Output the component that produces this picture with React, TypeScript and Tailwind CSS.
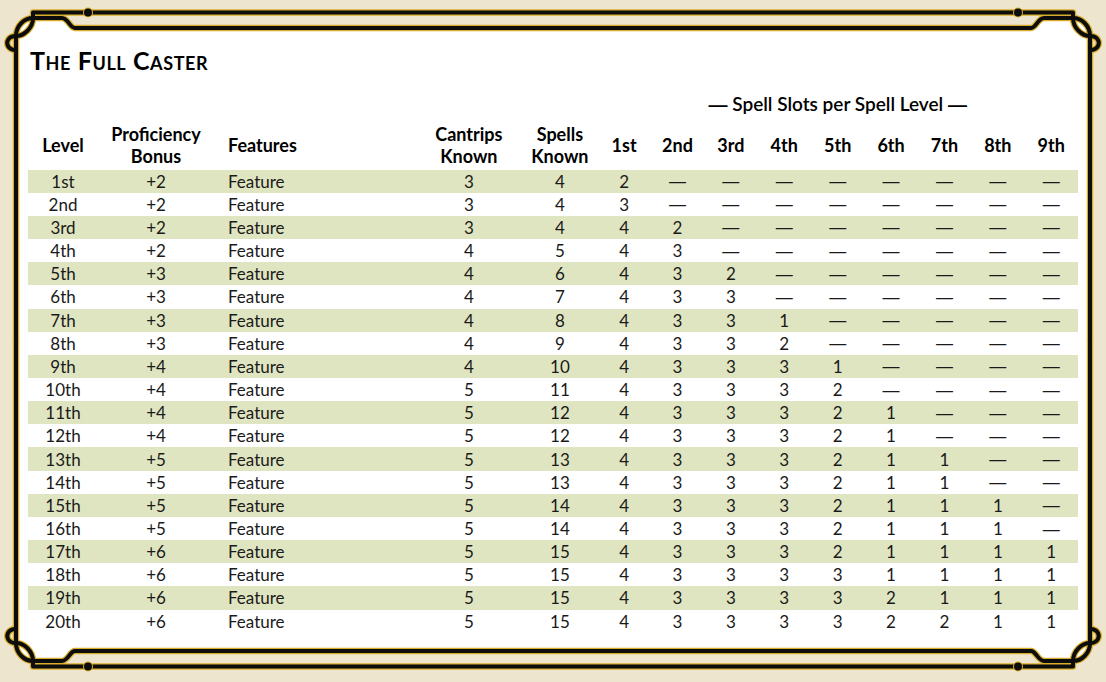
import React from "react";

type Row = { level: string; prof: string; cantrips: number; spells: number; slots: number[] };

const rows: Row[] = [
  { level: "1st", prof: "+2", cantrips: 3, spells: 4, slots: [2] },
  { level: "2nd", prof: "+2", cantrips: 3, spells: 4, slots: [3] },
  { level: "3rd", prof: "+2", cantrips: 3, spells: 4, slots: [4, 2] },
  { level: "4th", prof: "+2", cantrips: 4, spells: 5, slots: [4, 3] },
  { level: "5th", prof: "+3", cantrips: 4, spells: 6, slots: [4, 3, 2] },
  { level: "6th", prof: "+3", cantrips: 4, spells: 7, slots: [4, 3, 3] },
  { level: "7th", prof: "+3", cantrips: 4, spells: 8, slots: [4, 3, 3, 1] },
  { level: "8th", prof: "+3", cantrips: 4, spells: 9, slots: [4, 3, 3, 2] },
  { level: "9th", prof: "+4", cantrips: 4, spells: 10, slots: [4, 3, 3, 3, 1] },
  { level: "10th", prof: "+4", cantrips: 5, spells: 11, slots: [4, 3, 3, 3, 2] },
  { level: "11th", prof: "+4", cantrips: 5, spells: 12, slots: [4, 3, 3, 3, 2, 1] },
  { level: "12th", prof: "+4", cantrips: 5, spells: 12, slots: [4, 3, 3, 3, 2, 1] },
  { level: "13th", prof: "+5", cantrips: 5, spells: 13, slots: [4, 3, 3, 3, 2, 1, 1] },
  { level: "14th", prof: "+5", cantrips: 5, spells: 13, slots: [4, 3, 3, 3, 2, 1, 1] },
  { level: "15th", prof: "+5", cantrips: 5, spells: 14, slots: [4, 3, 3, 3, 2, 1, 1, 1] },
  { level: "16th", prof: "+5", cantrips: 5, spells: 14, slots: [4, 3, 3, 3, 2, 1, 1, 1] },
  { level: "17th", prof: "+6", cantrips: 5, spells: 15, slots: [4, 3, 3, 3, 2, 1, 1, 1, 1] },
  { level: "18th", prof: "+6", cantrips: 5, spells: 15, slots: [4, 3, 3, 3, 3, 1, 1, 1, 1] },
  { level: "19th", prof: "+6", cantrips: 5, spells: 15, slots: [4, 3, 3, 3, 3, 2, 1, 1, 1] },
  { level: "20th", prof: "+6", cantrips: 5, spells: 15, slots: [4, 3, 3, 3, 3, 2, 2, 1, 1] },
];

const slotHeads = ["1st", "2nd", "3rd", "4th", "5th", "6th", "7th", "8th", "9th"];

// Lato's em dash is short, Arial-metric one is a full em
const Dash = () => <span className="[font-family:'Liberation_Sans',sans-serif]">—</span>;

// one quarter of the frame, mirrored into the other corners
function Corner({ transform }: { transform?: string }) {
  const lines = (
    <>
      <path d="M 553 12.5 H 33 V 18" />
      <path d="M 553 28 H 75 C 70 28 68 18 62 18 H 33 C 24 18 16 26 16 36 V 340" />
      <path d="M 33 18 C 33 28 24 36 16 36 C 8 36 6 42 8 46 C 10 50 13 50 16 50" />
    </>
  );
  return (
    <g transform={transform}>
      <path d="M 16 36 C 16 26 24 18 33 18 H 62 C 68 18 70 28 75 28 V 40 H 16 Z" fill="#fff" />
      <g fill="none" stroke="#d9ad2c" strokeWidth="6.5" strokeLinejoin="round">{lines}</g>
      <g fill="none" stroke="#0d0d0d" strokeWidth="4" strokeLinejoin="round">{lines}</g>
      <circle cx="88" cy="12.5" r="5" fill="#d9ad2c" />
      <circle cx="88" cy="12.5" r="4" fill="#0d0d0d" />
    </g>
  );
}

function Frame() {
  return (
    <svg className="absolute inset-0 pointer-events-none" width="1106" height="682" viewBox="0 0 1106 682">
      <Corner />
      <Corner transform="matrix(-1 0 0 1 1106 0)" />
      <Corner transform="matrix(1 0 0 -1 0 679)" />
      <Corner transform="matrix(-1 0 0 -1 1106 679)" />
    </svg>
  );
}

export default function App() {
  return (
    <div className="relative w-[1106px] h-[682px] overflow-hidden bg-[#eee5cf] pt-[28px] pl-[16px] [font-family:Lato,'Liberation_Sans',sans-serif] text-[#1a1a1a]">
      <div className="w-[1074px] h-[623px] bg-white pt-[20px] pl-[12px]">
        <h1 className="pl-[2px] h-[24px] leading-[24px] text-[25px] font-bold tracking-[0.6px] text-black [font-variant-caps:small-caps]">
          The Full Caster
        </h1>

        <table className="mt-[14px] w-[1050px] table-fixed border-collapse">
          <colgroup>
            <col className="w-[70px]" />
            <col className="w-[116px]" />
            <col className="w-[201.4px]" />
            <col className="w-[107px]" />
            <col className="w-[75px]" />
            {slotHeads.map((s) => (
              <col key={s} className="w-[53.4px]" />
            ))}
          </colgroup>
          <thead className="text-[18px] leading-[21.6px] text-black">
            <tr className="h-[36px]">
              <th colSpan={5} />
              <th colSpan={9} className="font-semibold text-[19px] text-center align-middle">
                <Dash /> Spell Slots per Spell Level <Dash />
              </th>
            </tr>
            <tr className="h-[47.6px] font-bold">
              <th className="text-center align-middle font-bold">Level</th>
              <th className="text-center align-middle font-bold">
                Proficiency
                <br />
                Bonus
              </th>
              <th className="text-left align-middle font-bold pl-[14px]">Features</th>
              <th className="text-center align-middle font-bold">
                Cantrips
                <br />
                Known
              </th>
              <th className="text-center align-middle font-bold">
                Spells
                <br />
                Known
              </th>
              {slotHeads.map((s) => (
                <th key={s} className="text-center align-middle font-bold">
                  {s}
                </th>
              ))}
            </tr>
          </thead>
          <tbody className="text-[17px] leading-[19px]">
            {rows.map((r, i) => (
              <tr key={r.level} className={i % 2 === 0 ? "bg-[#e0e5c1]" : "bg-white"}>
                <td className="h-[23.16px] text-center p-0">{r.level}</td>
                <td className="text-center p-0">{r.prof}</td>
                <td className="text-left p-0 pl-[14px]">Feature</td>
                <td className="text-center p-0">{r.cantrips}</td>
                <td className="text-center p-0">{r.spells}</td>
                {slotHeads.map((s, k) => (
                  <td key={s} className="text-center p-0">
                    {r.slots[k] ?? <Dash />}
                  </td>
                ))}
              </tr>
            ))}
          </tbody>
        </table>
      </div>
      <Frame />
    </div>
  );
}
